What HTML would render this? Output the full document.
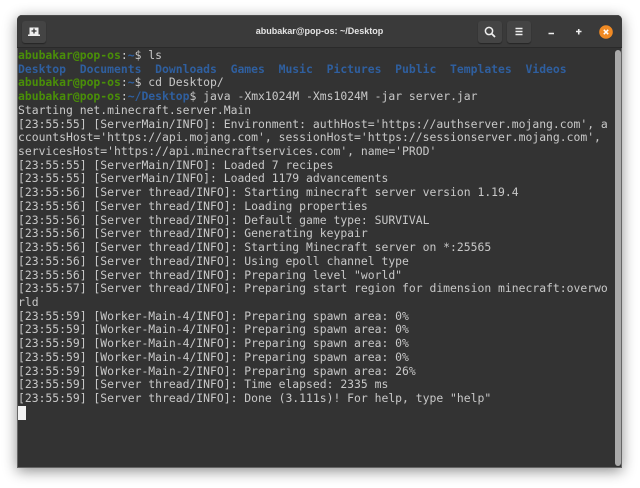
<!DOCTYPE html>
<html>
<head>
<meta charset="utf-8">
<style>
html,body{margin:0;padding:0;background:#fff;width:640px;height:488px;overflow:hidden}
#win{position:absolute;left:17px;top:15px;width:605px;height:453px;background:#333;border-radius:5px 5px 0 0;box-shadow:0 3px 14px rgba(0,0,0,.45);outline:1px solid #666;outline-offset:-1px;overflow:hidden}
#bar{position:absolute;left:0;top:0;width:605px;height:32px;background:#3a3a3a;border-bottom:1px solid #2a2a2a;box-shadow:inset 0 1px 0 #4a4a4a}
.btn{position:absolute;top:6px;width:24px;height:22px;background:#444;border-radius:3px;box-shadow:0 1px 1px #242424}
#title{position:absolute;left:0;right:0;top:9px;text-align:center;font:bold 9px/14px "Liberation Sans",sans-serif;color:#e4e4e4;filter:blur(.25px)}
#term{position:absolute;left:18px;top:49px;margin:0;font:11.4px/13.72px "DejaVu Sans Mono",monospace;color:#c8c8c8;white-space:pre;z-index:2;filter:blur(.3px)}
.g{color:#4a8f08;font-weight:bold}
.b{color:#2f5f9f;font-weight:bold}
#cur{position:absolute;left:18px;top:406px;width:7.5px;height:13.500px;background:#f2f2f2;z-index:3}
#sb{position:absolute;left:615px;top:50px;width:5.500px;height:416px;background:#aaa;border-radius:3px;z-index:3}
</style>
</head>
<body>
<div id="win">
<div id="bar">
<div class="btn" style="left:5px">
<svg width="24" height="22" viewBox="0 0 24 22"><path d="M7.500 6.500h9v7h1.500v1.500h-12v-1.500h1.500z" fill="#eee"/><path d="M12 7.500v5M9.500 10h5" stroke="#333" stroke-width="1.300"/></svg>
</div>
<div id="title">abubakar@pop-os: ~/Desktop</div>
<div class="btn" style="left:461px">
<svg width="24" height="22" viewBox="0 0 24 22"><circle cx="11" cy="10" r="3.600" fill="none" stroke="#eee" stroke-width="1.500"/><path d="M13.500 12.500l3.500 3.500" stroke="#eee" stroke-width="1.800"/></svg>
</div>
<div class="btn" style="left:490px">
<svg width="24" height="22" viewBox="0 0 24 22"><path d="M8.500 7.500h7M8.500 10.500h7M8.500 13.500h7" stroke="#eee" stroke-width="1.500"/></svg>
</div>
<svg style="position:absolute;left:521px;top:6px" width="84" height="24" viewBox="0 0 84 24"><path d="M10.500 12.500h5.500" stroke="#eee" stroke-width="1.600"/><path d="M38 10.500h5.500M40.750 8v5.500" stroke="#eee" stroke-width="1.600"/><circle cx="68" cy="11" r="6.800" fill="#f08a24"/><path d="M65.800 8.800l4.400 4.400M70.200 8.800l-4.400 4.400" stroke="#fff" stroke-width="1.500"/></svg>
</div>
</div>
<pre id="term"><span class="g">abubakar@pop-os</span>:<span class="b">~</span>$ ls
<span class="b">Desktop  Documents  Downloads  Games  Music  Pictures  Public  Templates  Videos</span>
<span class="g">abubakar@pop-os</span>:<span class="b">~</span>$ cd Desktop/
<span class="g">abubakar@pop-os</span>:<span class="b">~/Desktop</span>$ java -Xmx1024M -Xms1024M -jar server.jar
Starting net.minecraft.server.Main
[23:55:55] [ServerMain/INFO]: Environment: authHost='https://authserver.mojang.com', a
ccountsHost='https://api.mojang.com', sessionHost='https://sessionserver.mojang.com',
servicesHost='https://api.minecraftservices.com', name='PROD'
[23:55:55] [ServerMain/INFO]: Loaded 7 recipes
[23:55:55] [ServerMain/INFO]: Loaded 1179 advancements
[23:55:56] [Server thread/INFO]: Starting minecraft server version 1.19.4
[23:55:56] [Server thread/INFO]: Loading properties
[23:55:56] [Server thread/INFO]: Default game type: SURVIVAL
[23:55:56] [Server thread/INFO]: Generating keypair
[23:55:56] [Server thread/INFO]: Starting Minecraft server on *:25565
[23:55:56] [Server thread/INFO]: Using epoll channel type
[23:55:56] [Server thread/INFO]: Preparing level "world"
[23:55:57] [Server thread/INFO]: Preparing start region for dimension minecraft:overwo
rld
[23:55:59] [Worker-Main-4/INFO]: Preparing spawn area: 0%
[23:55:59] [Worker-Main-4/INFO]: Preparing spawn area: 0%
[23:55:59] [Worker-Main-4/INFO]: Preparing spawn area: 0%
[23:55:59] [Worker-Main-4/INFO]: Preparing spawn area: 0%
[23:55:59] [Worker-Main-2/INFO]: Preparing spawn area: 26%
[23:55:59] [Server thread/INFO]: Time elapsed: 2335 ms
[23:55:59] [Server thread/INFO]: Done (3.111s)! For help, type "help"</pre>
<div id="cur"></div>
<div id="sb"></div>
</body>
</html>
